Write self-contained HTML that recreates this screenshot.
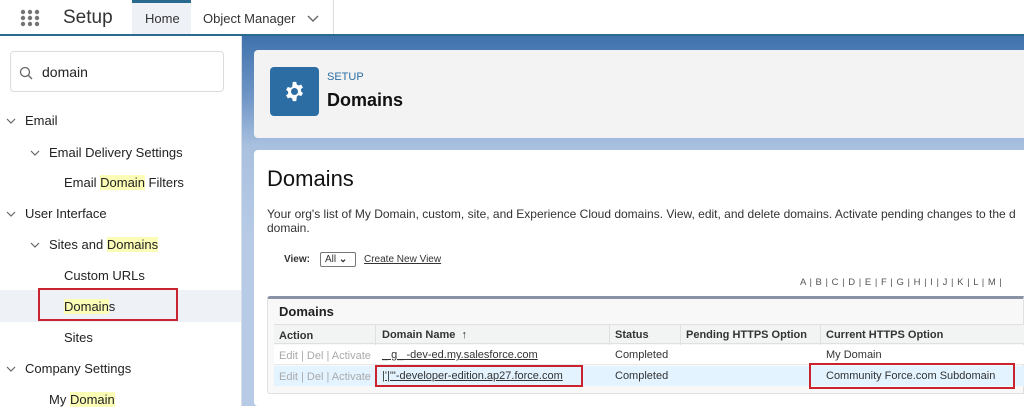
<!DOCTYPE html>
<html><head><meta charset="utf-8"><style>
*{box-sizing:border-box;margin:0;padding:0}
body{width:1024px;height:406px;overflow:hidden;position:relative;font-family:"Liberation Sans",Arial,sans-serif;background:#fff}
.top{position:absolute;left:0;top:0;width:1024px;height:36px;background:#fff;border-bottom:2px solid #2b6a8f}
.side{position:absolute;left:0;top:36px;width:242px;height:370px;background:#fff;border-right:1px solid #d8dde6}
.main{position:absolute;left:242px;top:36px;width:782px;height:370px;background:linear-gradient(#3f72ad 0px,#6e95c6 60px,#a9c0df 110px,#b7cbe6 200px)}
.t{position:absolute;white-space:nowrap}
.hl{background:#fbfcb5}
.sb{font-size:13px;color:#222}
.card{position:absolute;background:#f3f3f3;border-radius:4px}
.tbl{position:absolute;left:267px;top:296px;width:757px;height:98px;border:1px solid #e0e0e0;border-top:3px solid #8a93a5;background:#f8f8f8;border-radius:3px 0 0 3px}
.f{font-size:11px;color:#333}
.red{position:absolute;border:2px solid #c8232f}
.chev{position:absolute}
</style></head><body>
<div class="top">
 <svg style="position:absolute;left:20px;top:9px" width="20" height="18"><g fill="#747474"><circle cx="3" cy="3" r="2.2"/><circle cx="10" cy="3" r="2.2"/><circle cx="17" cy="3" r="2.2"/><circle cx="3" cy="9" r="2.2"/><circle cx="10" cy="9" r="2.2"/><circle cx="17" cy="9" r="2.2"/><circle cx="3" cy="15" r="2.2"/><circle cx="10" cy="15" r="2.2"/><circle cx="17" cy="15" r="2.2"/></g></svg>
 <div class="t" style="left:63px;top:7px;font-size:19px;color:#333">Setup</div>
 <div style="position:absolute;left:132px;top:0;width:59px;height:34px;background:#eef1f6;border-top:3px solid #2b6a8f"></div>
 <div class="t" style="left:145px;top:11px;font-size:13px;color:#333">Home</div>
 <div class="t" style="left:203px;top:11px;font-size:13px;color:#333">Object Manager</div>
 <svg style="position:absolute;left:307px;top:15px" width="12" height="8"><path d="M1 1L6 6L11 1" stroke="#666" stroke-width="1.4" fill="none"/></svg>
 <div style="position:absolute;left:333px;top:0;width:1px;height:34px;background:#ddd"></div>
</div>
<div class="side">
 <div style="position:absolute;left:10px;top:15px;width:214px;height:41px;border:1px solid #dcdcdc;border-radius:4px"></div>
 <svg style="position:absolute;left:19px;top:30px" width="14" height="14"><circle cx="6" cy="6" r="4.5" stroke="#666" stroke-width="1.3" fill="none"/><path d="M9.5 9.5L13 13" stroke="#666" stroke-width="1.4"/></svg>
 <div class="t sb" style="left:42px;top:28px;font-size:14px">domain</div>
 <div style="position:absolute;left:0;top:254px;width:241px;height:32px;background:#eef1f6"></div>
</div>
<svg class="chev" style="left:6px;top:118px" width="10" height="6"><path d="M1 1L5 5L9 1" stroke="#666" stroke-width="1.2" fill="none"/></svg>
<div class="t sb" style="left:25px;top:113px">Email</div>
<svg class="chev" style="left:30px;top:150px" width="10" height="6"><path d="M1 1L5 5L9 1" stroke="#666" stroke-width="1.2" fill="none"/></svg>
<div class="t sb" style="left:49px;top:145px">Email Delivery Settings</div>
<div class="t sb" style="left:64px;top:175px">Email <span class="hl">Domain</span> Filters</div>
<svg class="chev" style="left:6px;top:211px" width="10" height="6"><path d="M1 1L5 5L9 1" stroke="#666" stroke-width="1.2" fill="none"/></svg>
<div class="t sb" style="left:25px;top:206px">User Interface</div>
<svg class="chev" style="left:30px;top:242px" width="10" height="6"><path d="M1 1L5 5L9 1" stroke="#666" stroke-width="1.2" fill="none"/></svg>
<div class="t sb" style="left:49px;top:237px">Sites and <span class="hl">Domains</span></div>
<div class="t sb" style="left:64px;top:268px">Custom URLs</div>
<div class="t sb" style="left:64px;top:299px"><span class="hl">Domain</span>s</div>
<div class="red" style="left:38px;top:288px;width:140px;height:33px"></div>
<div class="t sb" style="left:64px;top:330px">Sites</div>
<svg class="chev" style="left:6px;top:366px" width="10" height="6"><path d="M1 1L5 5L9 1" stroke="#666" stroke-width="1.2" fill="none"/></svg>
<div class="t sb" style="left:25px;top:361px">Company Settings</div>
<div class="t sb" style="left:49px;top:392px">My <span class="hl">Domain</span></div>
<div class="main"></div>
<div class="card" style="left:254px;top:50px;width:780px;height:88px"></div>
<div style="position:absolute;left:270px;top:67px;width:49px;height:49px;background:#2c6ea4;border-radius:4px"></div>
<svg style="position:absolute;left:284px;top:81px" width="21" height="21" viewBox="0 0 24 24"><path fill="#fff" d="M10 1h4l.6 3 2.2 1.2 2.8-1.2 2 3.4-2.3 2 .1 2.5 2.3 1.9-2 3.5-2.9-1.1-2.1 1.3L14 23h-4l-.6-2.9-2.2-1.3-2.8 1.1-2-3.5L4.7 14.5V12L2.4 10.1l2-3.4 2.9 1.2L9.4 6.6zM12 8a4 4 0 100 8 4 4 0 000-8z"/></svg>
<div class="t" style="left:327px;top:71px;font-size:11px;color:#2c6ea4">SETUP</div>
<div class="t" style="left:327px;top:90px;font-size:18px;font-weight:bold;color:#111">Domains</div>
<div style="position:absolute;left:254px;top:150px;width:780px;height:256px;background:#fff;border-radius:4px"></div>
<div class="t" style="left:267px;top:166px;font-size:22px;color:#111">Domains</div>
<div class="t" style="left:267px;top:207px;font-size:12px;color:#333;line-height:14px">Your org's list of My Domain, custom, site, and Experience Cloud domains. View, edit, and delete domains. Activate pending changes to the d<br>domain.</div>
<div class="t" style="left:284px;top:254px;font-size:10px;font-weight:bold;color:#333">View:</div>
<div style="position:absolute;left:320px;top:252px;width:36px;height:15px;border:1px solid #777;border-radius:2px;font-size:10px;padding-left:4px;line-height:13px;color:#333">All <b>⌄</b></div>
<div class="t" style="left:364px;top:254px;font-size:10px;color:#333;text-decoration:underline">Create New View</div>
<div class="t" style="left:800px;top:277px;font-size:9.5px;color:#555;word-spacing:1px">A | B | C | D | E | F | G | H | I | J | K | L | M |</div>
<div class="tbl"></div>
<div class="t" style="left:279px;top:304px;font-size:13px;font-weight:bold;color:#222">Domains</div>
<div style="position:absolute;left:274px;top:324px;width:750px;height:20px;background:#f2f3f3;border-top:1px solid #e0e0e0;border-bottom:1px solid #e0e0e0"></div>
<div style="position:absolute;left:274px;top:345px;width:750px;height:20px;background:#fff;border-bottom:1px solid #e8e8e8"></div>
<div style="position:absolute;left:274px;top:366px;width:750px;height:20px;background:#e3f3ff"></div>
<div style="position:absolute;left:375px;top:324px;width:1px;height:21px;background:#e0e0e0"></div>
<div style="position:absolute;left:609px;top:324px;width:1px;height:21px;background:#e0e0e0"></div>
<div style="position:absolute;left:680px;top:324px;width:1px;height:21px;background:#e0e0e0"></div>
<div style="position:absolute;left:820px;top:324px;width:1px;height:21px;background:#e0e0e0"></div>
<div class="t f" style="left:279px;top:330px;font-weight:bold">Action</div>
<div class="t f" style="left:382px;top:329px;font-weight:bold">Domain Name &nbsp;↑</div>
<div class="t f" style="left:615px;top:329px;font-weight:bold">Status</div>
<div class="t f" style="left:686px;top:329px;font-weight:bold">Pending HTTPS Option</div>
<div class="t f" style="left:826px;top:329px;font-weight:bold">Current HTTPS Option</div>
<div class="t f" style="left:279px;top:350px;color:#aaa">Edit | Del | Activate</div>
<div class="t f" style="left:382px;top:349px;text-decoration:underline">_ g_ -dev-ed.my.salesforce.com</div>
<div class="t f" style="left:615px;top:349px">Completed</div>
<div class="t f" style="left:826px;top:349px">My Domain</div>
<div class="t f" style="left:279px;top:371px;color:#aaa">Edit | Del | Activate</div>
<div class="t f" style="left:382px;top:370px;text-decoration:underline">|'|"'-developer-edition.ap27.force.com</div>
<div class="t f" style="left:615px;top:370px">Completed</div>
<div class="t f" style="left:826px;top:370px">Community Force.com Subdomain</div>
<div class="red" style="left:375px;top:365px;width:208px;height:22px"></div>
<div class="red" style="left:809px;top:363px;width:206px;height:26px"></div>
</body></html>
